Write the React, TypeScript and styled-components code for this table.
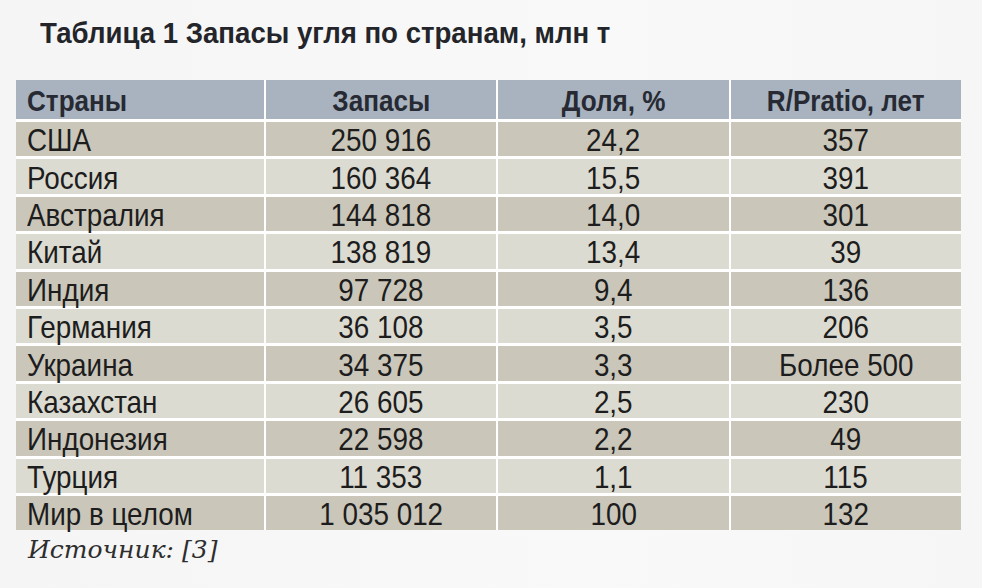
import { Fragment } from "react";
import styled, { createGlobalStyle } from "styled-components";

const GlobalStyle = createGlobalStyle`
  html, body {
    margin: 0;
    padding: 0;
    background: #f6f7f6;
  }
`;

interface Row {
  country: string;
  reserves: string;
  share: string;
  ratio: string;
}

const rows: Row[] = [
  { country: "США", reserves: "250 916", share: "24,2", ratio: "357" },
  { country: "Россия", reserves: "160 364", share: "15,5", ratio: "391" },
  { country: "Австралия", reserves: "144 818", share: "14,0", ratio: "301" },
  { country: "Китай", reserves: "138 819", share: "13,4", ratio: "39" },
  { country: "Индия", reserves: "97 728", share: "9,4", ratio: "136" },
  { country: "Германия", reserves: "36 108", share: "3,5", ratio: "206" },
  { country: "Украина", reserves: "34 375", share: "3,3", ratio: "Более 500" },
  { country: "Казахстан", reserves: "26 605", share: "2,5", ratio: "230" },
  { country: "Индонезия", reserves: "22 598", share: "2,2", ratio: "49" },
  { country: "Турция", reserves: "11 353", share: "1,1", ratio: "115" },
  { country: "Мир в целом", reserves: "1 035 012", share: "100", ratio: "132" },
];

export default function App() {
  return (
    <Page>
      <GlobalStyle />
      <Title>
        <Narrow $left>Таблица 1 Запасы угля по странам, млн т</Narrow>
      </Title>
      <Table>
        <HeadCell $left>
          <Narrow $left>Страны</Narrow>
        </HeadCell>
        <HeadCell>
          <Narrow>Запасы</Narrow>
        </HeadCell>
        <HeadCell>
          <Narrow>Доля, %</Narrow>
        </HeadCell>
        <HeadCell>
          <Narrow>R/Pratio, лет</Narrow>
        </HeadCell>
        {rows.map((r, i) => (
          <Fragment key={r.country}>
            <Cell $dark={i % 2 === 0} $left>
              <Narrow $left>{r.country}</Narrow>
            </Cell>
            <Cell $dark={i % 2 === 0}>
              <Narrow>{r.reserves}</Narrow>
            </Cell>
            <Cell $dark={i % 2 === 0}>
              <Narrow>{r.share}</Narrow>
            </Cell>
            <Cell $dark={i % 2 === 0}>
              <Narrow>{r.ratio}</Narrow>
            </Cell>
          </Fragment>
        ))}
      </Table>
      <Source>Источник: [3]</Source>
    </Page>
  );
}

const Page = styled.div`
  width: 982px;
  height: 588px;
  box-sizing: border-box;
  padding: 14px 0 0 16px;
  background: linear-gradient(90deg, #f4f5f4 0%, #f8f9f8 60%, #f5f6f5 100%);
  font-family: "Liberation Sans", Arial, sans-serif;
  color: #1c1c1c;
`;

// the reference uses a condensed grotesque; squeeze Liberation Sans to match
const Narrow = styled.span<{ $left?: boolean }>`
  display: inline-block;
  white-space: nowrap;
  transform: scaleX(0.87);
  transform-origin: ${(p) => (p.$left ? "left center" : "center center")};
`;

const Title = styled.div`
  margin-left: 24px;
  height: 46px;
  font-size: 30px;
  font-weight: 700;
  line-height: 38px;
  color: #23252a;
  & > ${Narrow} {
    transform: scaleX(0.92);
  }
`;

const Table = styled.div`
  display: grid;
  grid-template-columns: 248px 230px 231px 230px;
  grid-template-rows: 39px repeat(11, 34.4px);
  column-gap: 2px;
  row-gap: 3px;
  width: 945px;
  margin-top: 20px;
  background: #ffffff;
`;

const HeadCell = styled.div<{ $left?: boolean }>`
  display: flex;
  align-items: center;
  justify-content: ${(p) => (p.$left ? "flex-start" : "center")};
  padding-left: ${(p) => (p.$left ? "11px" : "0")};
  padding-top: 2px;
  background: #a8b3bf;
  font-size: 30px;
  font-weight: 700;
  color: #272a33;
`;

const Cell = styled.div<{ $dark: boolean; $left?: boolean }>`
  display: flex;
  align-items: center;
  justify-content: ${(p) => (p.$left ? "flex-start" : "center")};
  padding-left: ${(p) => (p.$left ? "11px" : "0")};
  padding-top: 3px;
  background: ${(p) => (p.$dark ? "#cac7ba" : "#dcdbd2")};
  font-size: 32px;
  color: #1d1d1d;
`;

const Source = styled.div`
  margin: 5px 0 0 12px;
  font-family: "DejaVu Serif", "Liberation Serif", serif;
  font-style: italic;
  font-size: 25px;
  color: #2e2e2e;
`;
